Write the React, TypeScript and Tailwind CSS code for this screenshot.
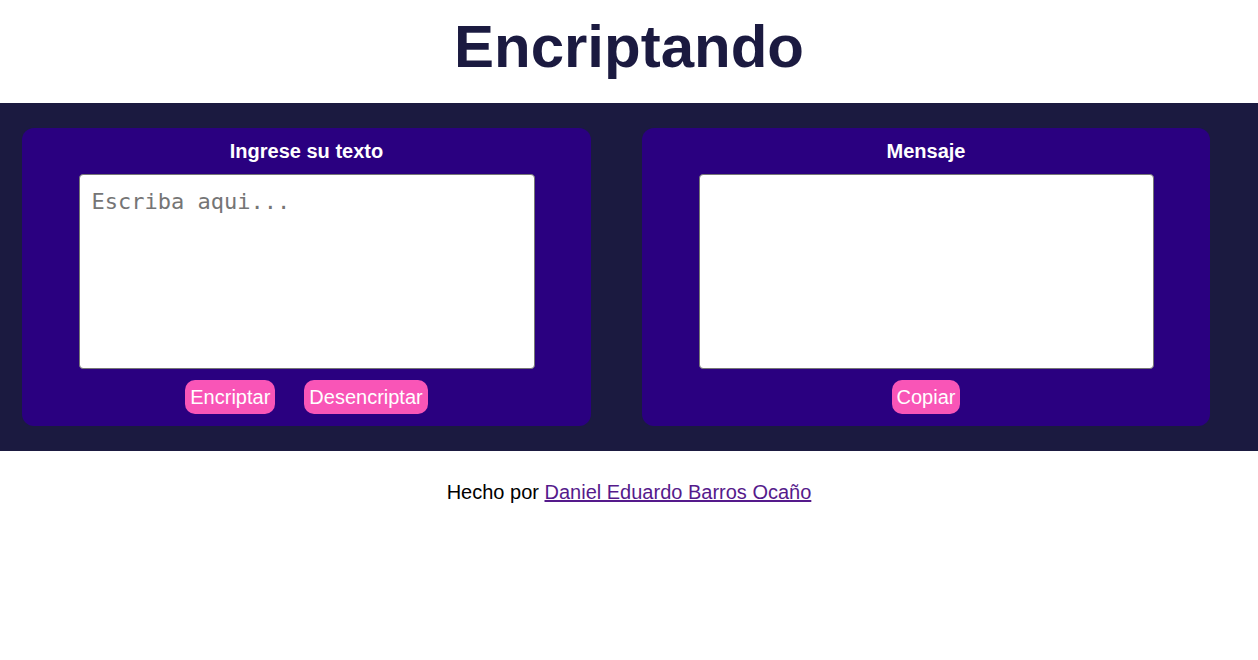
import { useState } from "react";

const encriptar = (s: string) =>
    s
        .replace(/e/g, "enter")
        .replace(/i/g, "imes")
        .replace(/a/g, "ai")
        .replace(/o/g, "ober")
        .replace(/u/g, "ufat");

const desencriptar = (s: string) =>
    s
        .replace(/enter/g, "e")
        .replace(/imes/g, "i")
        .replace(/ai/g, "a")
        .replace(/ober/g, "o")
        .replace(/ufat/g, "u");

function Boton({ label, onClick }: { label: string; onClick: () => void }) {
    return (
        <button
            type="button"
            onClick={onClick}
            className="px-[5px] py-[5px] rounded-[10px] bg-[#f955b7] text-white text-[20px] leading-[24px]"
        >
            {label}
        </button>
    );
}

export default function App() {
    const [texto, setTexto] = useState("");
    const [mensaje, setMensaje] = useState("");

    return (
        <div className="min-h-[660px] bg-white font-['Liberation_Sans',Arial,sans-serif]">
            {/* encabezado */}
            <header className="h-[103px] flex items-center justify-center">
                <h1 className="text-[60px] font-bold leading-none text-[#1b1a40] -mt-[9px]">Encriptando</h1>
            </header>

            <main className="bg-[#1b1a40] flex pl-[22px] gap-[51px] py-[25px]">
                <section className="w-[569px] rounded-[12px] bg-[#2a0080] flex flex-col items-center pt-[12px] pb-[12px]">
                    <h2 className="text-white font-bold text-[20px] leading-[23px]">Ingrese su texto</h2>
                    <textarea
                        value={texto}
                        onChange={(e) => setTexto(e.target.value)}
                        placeholder="Escriba aqui..."
                        className="mt-[11px] w-[456px] h-[195px] bg-white border border-[#767676] rounded-[4px] px-[12px] pt-[10px] pb-[12px] resize-none outline-none font-['DejaVu_Sans_Mono',monospace] text-[22px] text-black placeholder:text-[#757575]"
                    />
                    <div className="mt-[11px] flex gap-[29px]">
                        <Boton label="Encriptar" onClick={() => setMensaje(encriptar(texto))} />
                        <Boton label="Desencriptar" onClick={() => setMensaje(desencriptar(texto))} />
                    </div>
                </section>

                <section className="w-[568px] rounded-[12px] bg-[#2a0080] flex flex-col items-center pt-[12px] pb-[12px]">
                    <h2 className="text-white font-bold text-[20px] leading-[23px]">Mensaje</h2>
                    <textarea
                        value={mensaje}
                        readOnly
                        className="mt-[11px] w-[455px] h-[195px] bg-white border border-[#767676] rounded-[4px] px-[12px] pt-[10px] pb-[12px] resize-none outline-none font-['DejaVu_Sans_Mono',monospace] text-[22px] text-black"
                    />
                    <div className="mt-[11px] flex">
                        <Boton label="Copiar" onClick={() => navigator.clipboard?.writeText(mensaje)} />
                    </div>
                </section>
            </main>

            <footer className="mt-[30px] text-center text-[20px] leading-[23px] text-black">
                Hecho por{" "}
                <a href="#" className="text-[#551a8b] underline">
                    Daniel Eduardo Barros Ocaño
                </a>
            </footer>
        </div>
    );
}
